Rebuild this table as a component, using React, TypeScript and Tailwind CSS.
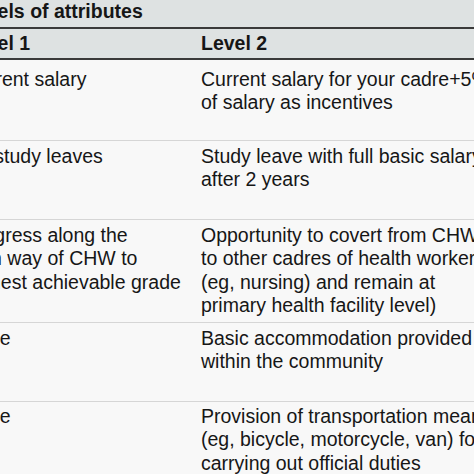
const rows = [
  {
    level1: ["Current salary"],
    level2: ["Current salary for your cadre+5%", "of salary as incentives"],
    box: "h-[81px] pt-[8px]",
  },
  {
    level1: ["No study leaves"],
    level2: ["Study leave with full basic salary", "after 2 years"],
    box: "h-[79px] pt-[4px]",
  },
  {
    level1: ["Progress along the", "path way of CHW to", "highest achievable grade"],
    level2: [
      "Opportunity to covert from CHW",
      "to other cadres of health workers",
      "(eg, nursing) and remain at",
      "primary health facility level)",
    ],
    box: "h-[103px] pt-[4px]",
  },
  {
    level1: ["None"],
    level2: ["Basic accommodation provided", "within the community"],
    box: "h-[79px] pt-[4px]",
  },
  {
    level1: ["None"],
    level2: [
      "Provision of transportation means",
      "(eg, bicycle, motorcycle, van) for",
      "carrying out official duties",
    ],
    box: "h-[90px] pt-[3px]",
  },
];

function Lines({ lines }: { lines: string[] }) {
  return (
    <div>
      {lines.map((line, i) => (
        <div key={i} className="whitespace-nowrap">
          {line}
        </div>
      ))}
    </div>
  );
}

export default function App() {
  return (
    <div className="w-[474px] h-[474px] overflow-hidden bg-[#f8f8f8] text-[#161616] text-[19.5px] leading-[23.4px] font-['Liberation_Sans',Arial,sans-serif]">
      <div className="-ml-[36px] w-[800px]">
        <div className="h-[29px] bg-[#dee2e2] border-b-2 border-[#3a3a3a] font-bold whitespace-nowrap">
          Levels of attributes
        </div>
        <div className="grid grid-cols-[237px_1fr] h-[31px] pt-[3px] bg-[#dee2e2] border-b-2 border-[#3a3a3a] font-bold">
          <div>Level 1</div>
          <div>Level 2</div>
        </div>
        {rows.map((row, index) => (
          <div
            key={index}
            className={`grid grid-cols-[237px_1fr] border-b border-[#d6d6d6] ${row.box}`}
          >
            <Lines lines={row.level1} />
            <Lines lines={row.level2} />
          </div>
        ))}
      </div>
    </div>
  );
}
